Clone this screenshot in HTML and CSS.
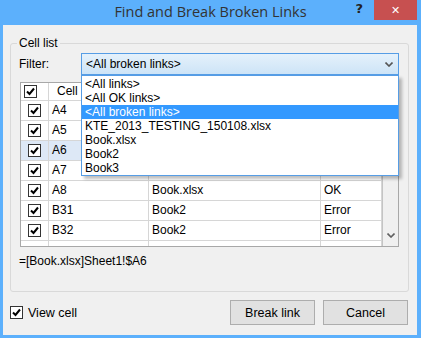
FILE: index.html
```html
<!DOCTYPE html>
<html lang="en">
<head>
    <meta charset="UTF-8">
    <title>Find and Break Broken Links</title>
    <link rel="stylesheet" href="styles.css">
</head>
<body>
    <div class="window">
        <div class="titlebar">
            <div></div>
            <div class="title">Find and Break Broken Links</div>
            <div class="controls">
                <span class="help">?</span>
                <span class="close">&#x2715;</span>
            </div>
        </div>

        <div class="client">
            <fieldset class="group">
                <legend>Cell list</legend>

                <div class="filter-row">
                    <label class="filter-label">Filter:</label>
                    <div class="combo">
                        <span>&lt;All broken links&gt;</span>
                        <svg class="chevron" width="8" height="5" viewBox="0 0 8 5"><path d="M0.5 0.5 L4 4 L7.5 0.5" fill="none" stroke="#555" stroke-width="1.6"/></svg>
                        <ul class="dropdown">
                            <li>&lt;All links&gt;</li>
                            <li>&lt;All OK links&gt;</li>
                            <li class="active">&lt;All broken links&gt;</li>
                            <li>KTE_2013_TESTING_150108.xlsx</li>
                            <li>Book.xlsx</li>
                            <li>Book2</li>
                            <li>Book3</li>
                        </ul>
                    </div>
                </div>

                <div class="grid">
                    <div class="row head">
                        <div class="c chk left"><span class="box"><svg width="11" height="11" viewBox="0 0 11 11"><path d="M2 5.5 L4.5 8 L9 2.5" fill="none" stroke="#000" stroke-width="2"/></svg></span></div>
                        <div class="c">Cell</div>
                        <div class="c">Workbook</div>
                        <div class="c">Status</div>
                        <div class="c scroll"></div>
                    </div>
                    <!-- rows -->
                    <div class="row">
                        <div class="c chk"><span class="box"><svg width="11" height="11" viewBox="0 0 11 11"><path d="M2 5.5 L4.5 8 L9 2.5" fill="none" stroke="#000" stroke-width="2"/></svg></span></div>
                        <div class="c">A4</div><div class="c">Book.xlsx</div><div class="c">Error</div><div class="c scroll"></div>
                    </div>
                    <div class="row">
                        <div class="c chk"><span class="box"><svg width="11" height="11" viewBox="0 0 11 11"><path d="M2 5.5 L4.5 8 L9 2.5" fill="none" stroke="#000" stroke-width="2"/></svg></span></div>
                        <div class="c">A5</div><div class="c">Book.xlsx</div><div class="c">Error</div><div class="c scroll"></div>
                    </div>
                    <div class="row selected">
                        <div class="c chk"><span class="box"><svg width="11" height="11" viewBox="0 0 11 11"><path d="M2 5.5 L4.5 8 L9 2.5" fill="none" stroke="#000" stroke-width="2"/></svg></span></div>
                        <div class="c">A6</div><div class="c">Book.xlsx</div><div class="c">OK</div><div class="c scroll"></div>
                    </div>
                    <div class="row">
                        <div class="c chk"><span class="box"><svg width="11" height="11" viewBox="0 0 11 11"><path d="M2 5.5 L4.5 8 L9 2.5" fill="none" stroke="#000" stroke-width="2"/></svg></span></div>
                        <div class="c">A7</div><div class="c">Book.xlsx</div><div class="c">OK</div><div class="c scroll"></div>
                    </div>
                    <div class="row">
                        <div class="c chk"><span class="box"><svg width="11" height="11" viewBox="0 0 11 11"><path d="M2 5.5 L4.5 8 L9 2.5" fill="none" stroke="#000" stroke-width="2"/></svg></span></div>
                        <div class="c">A8</div><div class="c">Book.xlsx</div><div class="c">OK</div><div class="c scroll"></div>
                    </div>
                    <div class="row">
                        <div class="c chk"><span class="box"><svg width="11" height="11" viewBox="0 0 11 11"><path d="M2 5.5 L4.5 8 L9 2.5" fill="none" stroke="#000" stroke-width="2"/></svg></span></div>
                        <div class="c">B31</div><div class="c">Book2</div><div class="c">Error</div><div class="c scroll"></div>
                    </div>
                    <div class="row">
                        <div class="c chk"><span class="box"><svg width="11" height="11" viewBox="0 0 11 11"><path d="M2 5.5 L4.5 8 L9 2.5" fill="none" stroke="#000" stroke-width="2"/></svg></span></div>
                        <div class="c">B32</div><div class="c">Book2</div><div class="c">Error</div>
                        <div class="c scroll"><svg class="scroll-arrow" width="8" height="5" viewBox="0 0 8 5"><path d="M0.5 0.5 L4 4 L7.5 0.5" fill="none" stroke="#606060" stroke-width="1.6"/></svg></div>
                    </div>
                    <div class="row tail">
                        <div class="c"></div><div class="c"></div><div class="c"></div><div class="c"></div><div class="c scroll"></div>
                    </div>
                </div>

                <div class="formula">=[Book.xlsx]Sheet1!$A6</div>
            </fieldset>

            <div class="footer">
                <label class="view-cell">
                    <span class="box"><svg width="11" height="11" viewBox="0 0 11 11"><path d="M2 5.5 L4.5 8 L9 2.5" fill="none" stroke="#000" stroke-width="2"/></svg></span>
                    View cell
                </label>
                <div class="buttons">
                    <button>Break link</button>
                    <button>Cancel</button>
                </div>
            </div>
        </div>
    </div>
</body>
</html>
```

FILE: styles.css
```css
:root {
    --win-blue: #5cb0fc;
    --face: #f0f0f0;
    --grid-line: #d6d6d6;
    --select-blue: #3399ff;
}

* {
    box-sizing: border-box;
}

body {
    margin: 0;
    font-family: "Liberation Sans", Arial, sans-serif;
    font-size: 12px;
    color: #000;
}

.window {
    width: 421px;
    height: 338px;
    background-color: var(--win-blue);
    padding: 0 4px 3px 3px;
    display: flex;
    flex-direction: column;
}

.titlebar {
    height: 25px;
    display: grid;
    grid-template-columns: 1fr auto 1fr;
    align-items: start;
    margin: 0 -4px 0 -3px;
}

.title {
    font-family: "Open Sans", "Noto Sans", sans-serif;
    font-size: 14.5px;
    color: #333;
    line-height: 24px;
}

.controls {
    display: flex;
    justify-content: flex-end;
    align-items: flex-start;
}

.help {
    font-family: "DejaVu Sans", sans-serif;
    font-weight: bold;
    font-size: 13px;
    color: #222;
    line-height: 14px;
    margin: 2px 11px 0 0;
}

.close {
    width: 43px;
    height: 20px;
    margin-right: 4px;
    background-color: #c75050;
    color: #fff;
    font-family: "DejaVu Sans", sans-serif;
    font-size: 11px;
    font-weight: bold;
    display: flex;
    align-items: center;
    justify-content: center;
}

.client {
    flex: 1;
    background-color: var(--face);
    display: flex;
    flex-direction: column;
}

.group {
    margin: 10px 8px 0 7px;
    padding: 0 9px 0 8px;
    border: 1px solid #d9d9d9;
    border-radius: 3px;
    height: 257px;
    min-width: 0;
}

.group legend {
    margin-left: -2px;
    padding: 0 2px;
    line-height: 16px;
    color: #000;
}

.filter-row {
    display: flex;
    margin-top: 2px;
    height: 22px;
}

.filter-label {
    width: 62px;
    line-height: 22px;
}

.combo {
    position: relative;
    width: 318px;
    height: 22px;
    border: 1px solid #569de5;
    background: linear-gradient(#e5f1fb, #cde4f7);
    padding: 0 0 0 4px;
    line-height: 20px;
    display: flex;
    justify-content: space-between;
    align-items: center;
}

.combo .chevron {
    margin-right: 5px;
}

.dropdown {
    position: absolute;
    top: 21px;
    left: -1px;
    width: 318px;
    margin: 0;
    padding: 1px 0 0 0;
    list-style: none;
    background-color: #fff;
    border: 1px solid #569de5;
    box-shadow: 3px 3px 3px rgba(0, 0, 0, 0.25);
    z-index: 10;
}

.dropdown li {
    height: 14px;
    line-height: 14px;
    padding-left: 3px;
}

.dropdown li.active {
    background-color: var(--select-blue);
    color: #fff;
}

.grid {
    margin: 7px 0 0 1px;
    width: 379px;
    height: 165px;
    border: 1px solid #a8a8a8;
    background-color: #fff;
    overflow: hidden;
}

.row {
    display: grid;
    grid-template-columns: 28px 100px 172px 61px 16px;
    height: 20px;
}

.row.head {
    height: 18px;
}

.row.tail {
    height: 6px;
}

.c {
    border-right: 1px solid var(--grid-line);
    border-bottom: 1px solid var(--grid-line);
    padding-left: 3px;
    line-height: 19px;
    white-space: nowrap;
    overflow: hidden;
}

.head .c {
    line-height: 17px;
    padding-left: 8px;
}

.c.chk {
    padding: 0;
    display: flex;
    align-items: center;
    justify-content: center;
}

.head .c.chk {
    padding: 0 0 0 3px;
    justify-content: flex-start;
}

.c.scroll {
    border-right: none;
    border-bottom: none;
    border-left: 1px solid #c4c4c4;
    background-color: var(--face);
    padding: 0;
    display: flex;
    align-items: flex-end;
    justify-content: center;
}

.scroll-arrow {
    margin-bottom: 3px;
}

.row.selected .c {
    background-color: #dde8f6;
}

.row.selected .c.scroll {
    background-color: var(--face);
}

.box {
    width: 13px;
    height: 13px;
    border: 1px solid #333;
    background-color: #fff;
    display: inline-flex;
    align-items: center;
    justify-content: center;
}

.formula {
    margin-top: 7px;
    line-height: 14px;
}

.footer {
    display: flex;
    justify-content: space-between;
    align-items: center;
    margin: 8px 9px 0 7px;
}

.view-cell {
    display: flex;
    align-items: center;
    gap: 5px;
    font-size: 12.5px;
}

.buttons {
    display: flex;
    gap: 8px;
}

button {
    width: 85px;
    height: 25px;
    font-family: "Liberation Sans", Arial, sans-serif;
    font-size: 12.5px;
    background-color: #e1e1e1;
    border: 1px solid #adadad;
    color: #000;
    padding: 0;
}
```
